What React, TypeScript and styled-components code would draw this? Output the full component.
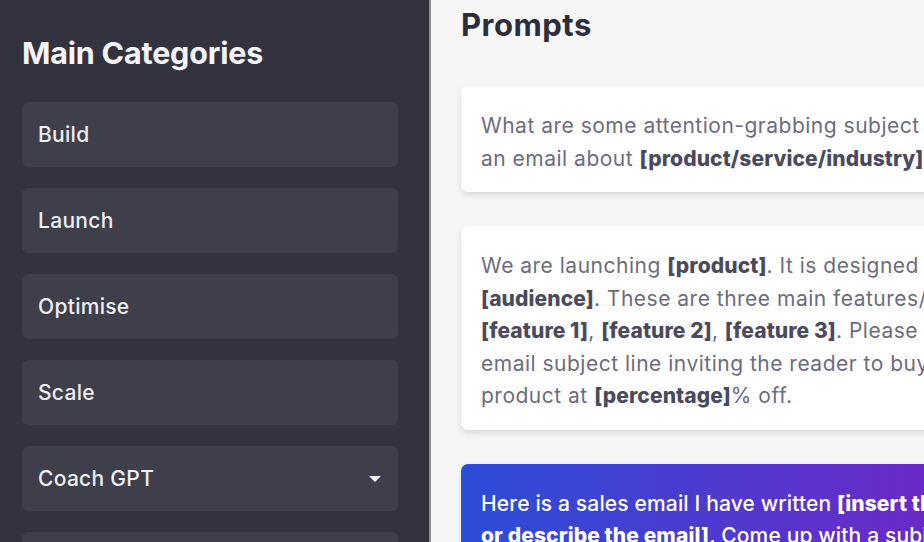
import React from "react";
import styled, { createGlobalStyle } from "styled-components";

const Global = createGlobalStyle`
  html, body { margin: 0; padding: 0; height: 100%; overflow: hidden; }
  body { font-family: Inter, "Noto Sans", "Liberation Sans", sans-serif; }
  #root { height: 100%; }
`;

const Page = styled.div`
  display: flex;
  width: 924px;
  height: 542px;
  overflow: hidden;
`;

const Sidebar = styled.aside`
  width: 429px;
  flex-shrink: 0;
  box-sizing: border-box;
  background: #33333f;
  padding: 35px 31px 0 22px;
  display: flex;
  flex-direction: column;
`;

const SideTitle = styled.h2`
  margin: 0 0 31px;
  font-size: 30.5px;
  line-height: 36px;
  font-weight: 700;
  color: #f4f4f8;
  letter-spacing: -0.2px;
`;

const CategoryList = styled.div`
  display: flex;
  flex-direction: column;
  gap: 21px;
`;

const Category = styled.div`
  height: 65px;
  flex-shrink: 0;
  border-radius: 6px;
  background: #3e3f4b;
  display: flex;
  align-items: center;
  justify-content: space-between;
  padding: 0 16px;
  font-size: 21px;
  letter-spacing: 0.3px;
  font-weight: 500;
  color: #eeeef4;
`;

const Caret = styled.span`
  width: 0;
  height: 0;
  border-left: 6px solid transparent;
  border-right: 6px solid transparent;
  border-top: 6px solid #f4f4f8;
  margin-right: 1px;
`;

const Main = styled.main`
  flex: 1;
  min-width: 0;
  overflow: hidden;
  background: #f6f6f7;
  border-left: 2px solid #8f8f96;
  padding: 7px 0 0 30px;
`;

const Heading = styled.h1`
  margin: 0 0 43px;
  font-size: 31px;
  line-height: 36px;
  font-weight: 700;
  color: #2d2d3b;
  letter-spacing: 0.5px;
`;

const Cards = styled.div`
  display: flex;
  flex-direction: column;
  gap: 34px;
`;

const Card = styled.div<{ $accent?: boolean }>`
  width: 589px;
  box-sizing: border-box;
  padding: 24px 20px 17px;
  border-radius: 7px;
  font-size: 21px;
  letter-spacing: ${(p) => (p.$accent ? "0.15px" : "0.5px")};
  line-height: 32.5px;
  font-weight: ${(p) => (p.$accent ? 500 : 400)};
  color: ${(p) => (p.$accent ? "#ffffff" : "#6c6c7c")};
  background: ${(p) =>
    p.$accent ? "linear-gradient(90deg, #2b4dd8 0%, #6a2ac8 78%, #7a25c4 100%)" : "#ffffff"};
  box-shadow: 0 3px 6px rgba(0, 0, 0, 0.12);
`;

const Bold = styled.b<{ $light?: boolean }>`
  font-weight: 800;
  letter-spacing: 0.1px;
  color: ${(p) => (p.$light ? "#ffffff" : "#4a4a5c")};
`;

const categories = ["Build", "Launch", "Optimise", "Scale", "Coach GPT", "Resources"];

export default function App() {
  return (
    <Page>
      <Global />
      <Sidebar>
        <SideTitle>Main Categories</SideTitle>
        <CategoryList>
          {categories.map((c) => (
            <Category key={c}>
              <span>{c}</span>
              {c === "Coach GPT" && <Caret />}
            </Category>
          ))}
        </CategoryList>
      </Sidebar>
      <Main>
        <Heading>Prompts</Heading>
        <Cards>
          <Card>
            What are some attention-grabbing subject lines for an email about{" "}
            <Bold>[product/service/industry]</Bold>?
          </Card>
          <Card>
            We are launching <Bold>[product]</Bold>. It is designed for <Bold>[audience]</Bold>.
            These are three main features/benefits: <Bold>[feature 1]</Bold>,{" "}
            <Bold>[feature 2]</Bold>, <Bold>[feature 3]</Bold>. Please write an email subject line
            inviting the reader to buy the product at <Bold>[percentage]</Bold>% off.
          </Card>
          <Card $accent>
            Here is a sales email I have written{" "}
            <Bold $light>[insert the email or describe the email]</Bold>. Come up with a
            subject line that will make readers want to open it.
          </Card>
        </Cards>
      </Main>
    </Page>
  );
}
